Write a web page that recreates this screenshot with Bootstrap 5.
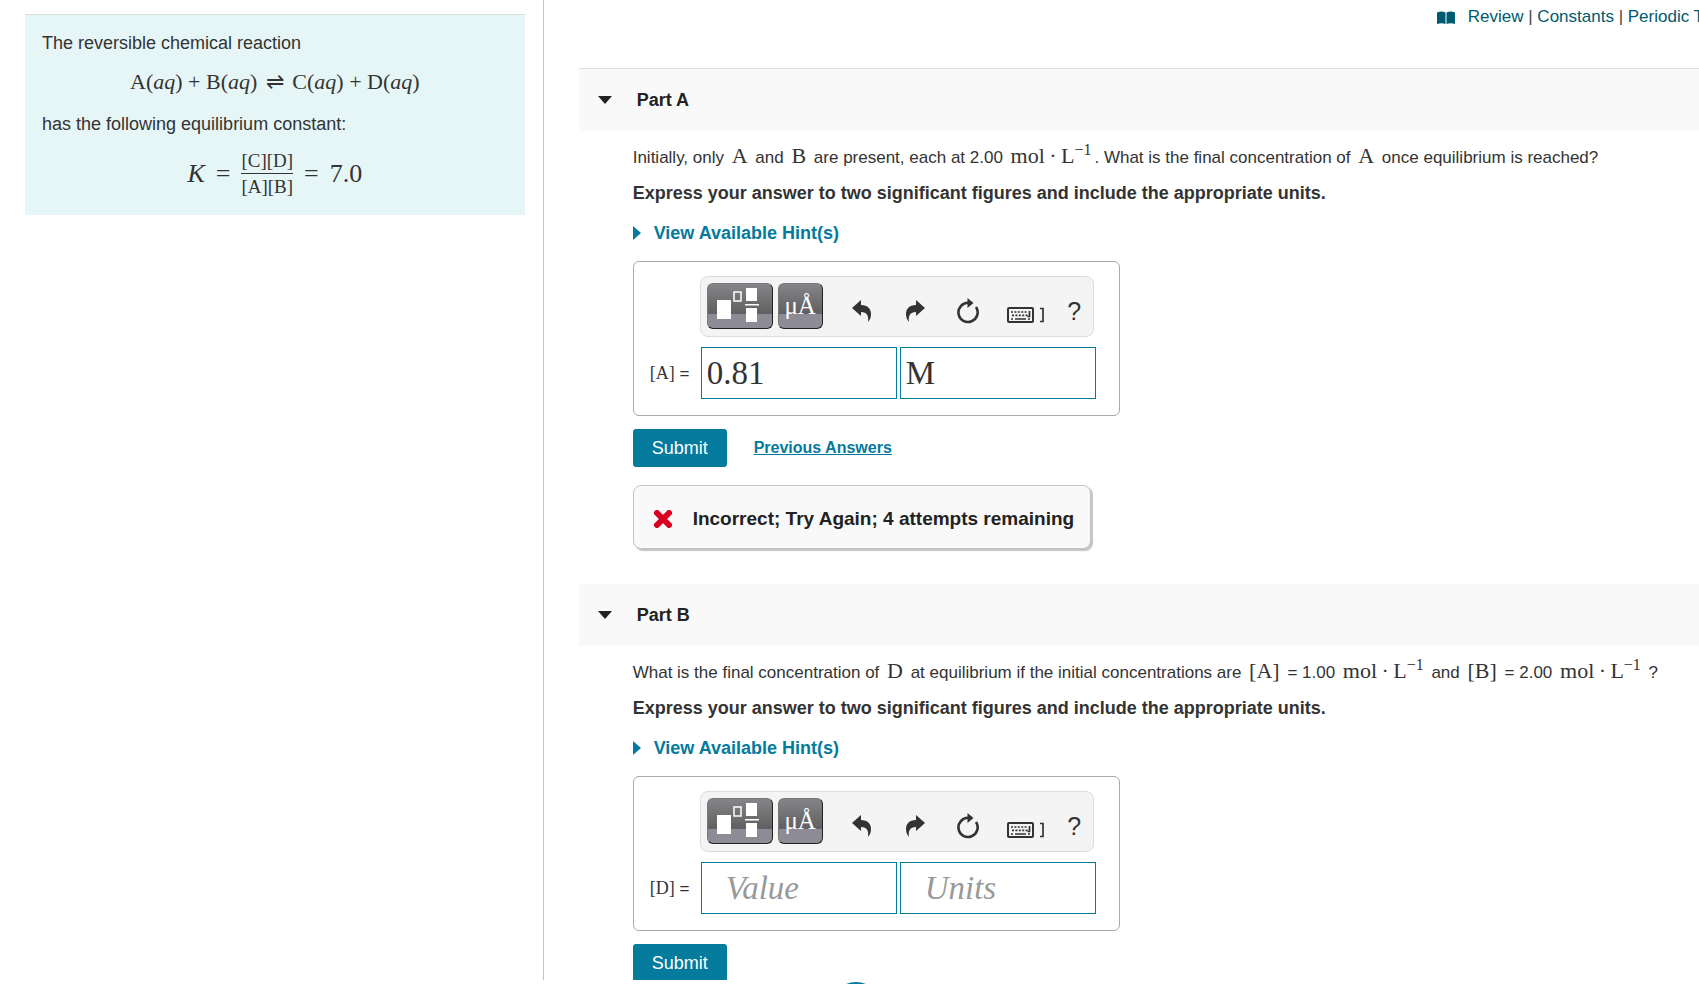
<!DOCTYPE html>
<html lang="en">
<head>
<meta charset="utf-8">
<meta name="viewport" content="width=device-width, initial-scale=1">
<title>Equilibrium constants</title>
<link href="https://cdn.jsdelivr.net/npm/bootstrap@5.3.0/dist/css/bootstrap.min.css" rel="stylesheet">
<style>
  :root { --teal: #047a9c; --deep: #005a70; }
  body { font: 18px/24px "Liberation Sans", Arial, sans-serif; color: #333; background: #fff; }
  p { margin: 0; }
  .side { flex: 0 0 32%; border-right: 1px solid #b4c8d6; padding: 14px 18px 0 25px; }
  .intro { background: #e6f6f7; border-top: 1px solid #ddd; padding: 16px 17px; }
  .work { min-width: 0; padding-left: 35px; }
  .refs { width: 262px; height: 68px; padding-top: 5px; color: #444; font-size: 17px; overflow: hidden; }
  .refs a { color: var(--deep); text-decoration: none; }
  .math { font-family: "Liberation Serif", "Times New Roman", serif; font-size: 22px; line-height: 24px; }
  .math sup { font-size: 16px; line-height: 1; top: -8px; vertical-align: baseline; }
  .reaction { padding-top: 15px; padding-bottom: 18px; }
  .arrows { margin: 0 3px; }
  .constant { font-size: 26px; padding-top: 12px; gap: 11px; }
  .fraction { font-size: 19px; line-height: 25px; }
  .fraction span:first-child { border-bottom: 1px solid #333; }
  .rule-top { border-top: 1px solid #ddd; }
  .part-head { background: #f9f9f9; height: 62px; padding-left: 19px; gap: 25px; color: #222; }
  .part-head h2 { font-size: 18px; line-height: 24px; font-weight: 700; margin: 0; }
  .part-body { padding: 15px 0 0 54px; }
  .ask { font-size: 17px; white-space: nowrap; }
  .ask .math { line-height: 18px; margin: 0 3px; }
  .order { font-weight: 700; padding-top: 11px; }
  .hint { color: var(--teal); font-weight: 700; text-decoration: none; gap: 13px; padding-top: 16px; }
  .answer { width: 487px; border: 1px solid #a9a9a9; border-radius: 6px; margin-top: 16px; padding: 14px 23px 16px 16px; }
  .tools { width: 394px; height: 61px; margin-right: 2px; border: 1px solid #ddd; border-radius: 8px; background: #f4f4f4; padding: 6px; color: #333; }
  .tools button { flex-shrink: 0; border: 0; background: none; padding: 0; color: inherit; }
  .tools .pad { height: 46px; border: 1px solid #222; border-top-color: #777; border-left-color: #777; border-radius: 6px; color: #fff;
    background: linear-gradient(#858589, #606062 67%, #8d8b96 68%, #8d8b96); }
  .pad-a { width: 66px; }
  .pad-b { width: 45px; margin-left: 5px; }
  .tools .pad-b { font-size: 25px; }
  .tools .ico { height: 46px; display: flex; align-items: center; justify-content: center; width: 53px; padding-top: 10px; }
  .ico-first { margin-left: 13px; }
  .tools .ico-keys { padding-top: 18px; padding-left: 9px; }
  .tools .ico-help { width: 44px; padding-left: 9px; font-size: 25px; }
  .entry { padding-top: 10px; }
  .entry label { width: 51px; font-size: 17px; white-space: nowrap; }
  .entry label span { font-size: 18px; }
  .entry .form-control { width: 196px; height: 52px; border: 1px solid var(--teal); border-radius: 0; padding: 0 5px; font: 33px/50px "Liberation Serif", "Times New Roman", serif; color: #333; }
  .entry .form-control + .form-control { margin-left: 3px; }
  .entry .form-control::placeholder { color: #999; font-style: italic; opacity: 1; }
  .entry .form-control:placeholder-shown { padding-left: 24px; }
  .send { width: 94px; height: 38px; background: var(--teal); color: #fff; border: 0; border-radius: 3px; font-size: 18px; padding: 0; }
  .send-row { padding-top: 13px; gap: 27px; }
  .previous { color: var(--teal); font-size: 16px; font-weight: 700; }
  .result { width: 458px; height: 64px; margin-top: 18px; margin-bottom: 35px; padding: 4px 0 0 20px; gap: 21px; background: #f9f9f9; border: 1px solid #c4c4c4; border-radius: 8px; box-shadow: 2px 2px 1px #c4c4c4; color: #222; font-size: 19px; font-weight: 700; white-space: nowrap; }
  .foot { flex: 0 0 4px; overflow: hidden; padding: 2px 0 0 12px; }
  .bubble { width: 52px; height: 52px; border-radius: 50%; background: var(--teal); }
</style>
</head>
<body>
<svg class="d-none" xmlns="http://www.w3.org/2000/svg">
  <symbol id="i-template" viewBox="0 0 64 44">
    <path fill="#fff" d="M9 16h14v19H9zM38 4h11v13H38zM38 24h11v14H38zM37 20h14v1.600H37z"/>
    <path fill="none" stroke="#fff" stroke-width="1.5" d="M26 8h7v9h-7z"/>
  </symbol>
  <symbol id="i-undo" viewBox="0 0 20 22">
    <path fill="currentColor" d="M0 8 9 0v5c7 0 10 4 10 9 0 3-1 6-3 8 1-6-1-10-7-10v4z"/>
  </symbol>
  <symbol id="i-reset" viewBox="0 0 24 26">
    <path fill="none" stroke="currentColor" stroke-width="2.6" d="M12.500 4.800A9.600 9.600 0 1 0 20 9"/>
    <path fill="currentColor" d="M11.500 0 17.500 5l-6 5z"/>
  </symbol>
  <symbol id="i-keys" viewBox="0 0 38 17">
    <rect x="1" y="1" width="25" height="14" rx="1" fill="none" stroke="currentColor" stroke-width="2"/>
    <path fill="none" stroke="currentColor" stroke-width="1.7" stroke-dasharray="2 1.4" d="M4 5h17M5 8.300h16"/>
    <path fill="none" stroke="currentColor" stroke-width="1.7" d="M4 12h2M8 12h11M21 12h2M22.500 4v5.500h-2M33 1.500h3v13h-3"/>
  </symbol>
</svg>

<div class="vh-100 d-flex flex-column overflow-hidden">
  <main class="d-flex flex-fill overflow-hidden">
    <aside class="side">
      <section class="intro">
        <p>The reversible chemical reaction</p>
        <p class="math reaction text-center">A(<i>aq</i>) + B(<i>aq</i>)<span class="arrows"> ⇌ </span>C(<i>aq</i>) + D(<i>aq</i>)</p>
        <p>has the following equilibrium constant:</p>
        <div class="math constant d-flex justify-content-center align-items-center">
          <i>K</i><span>=</span>
          <span class="fraction d-flex flex-column text-center"><span>[C][D]</span><span>[A][B]</span></span>
          <span>=</span><span>7.0</span>
        </div>
      </section>
    </aside>

    <div class="work flex-fill">
      <nav class="refs ms-auto text-nowrap" aria-label="References">
        <svg class="me-2" width="18" height="14" viewBox="0 0 18 14" aria-hidden="true"><path fill="#005a70" d="M0 1.500C3 .2 6 .2 8.500 1.500v11.500C6 12 3 12 0 13zM9.500 1.500C12 .2 15 .2 18 1.500V13c-3-1-6-1-8.500 0z"/></svg>
        <a href="#">Review</a> | <a href="#">Constants</a> | <a href="#">Periodic Table</a>
      </nav>

      <section>
        <div class="rule-top"></div>
        <header class="part-head d-flex align-items-center">
          <svg width="14" height="8" aria-hidden="true"><path fill="#222" d="M0 0h14L7 8z"/></svg>
          <h2>Part A</h2>
        </header>
        <div class="part-body">
          <p class="ask">Initially, only <span class="math">A</span> and <span class="math">B</span> are present, each at 2.00 <span class="math">mol&thinsp;·&thinsp;L<sup>−1</sup></span>. What is the final concentration of <span class="math">A</span> once equilibrium is reached?</p>
          <p class="order">Express your answer to two significant figures and include the appropriate units.</p>
          <a class="hint d-flex align-items-center" href="#"><svg width="8" height="14" aria-hidden="true"><path fill="currentColor" d="M0 0 8 7 0 14z"/></svg>View Available Hint(s)</a>
          <div class="answer">
            <div class="tools ms-auto d-flex">
              <button class="pad pad-a" type="button" aria-label="Templates"><svg class="d-block" width="64" height="44"><use href="#i-template"/></svg></button>
              <button class="pad pad-b math" type="button">μÅ</button>
              <button class="ico ico-first" type="button" aria-label="Undo"><svg width="20" height="22"><use href="#i-undo"/></svg></button>
              <button class="ico" type="button" aria-label="Redo"><svg width="20" height="22" viewBox="0 0 20 22"><g transform="matrix(-1 0 0 1 20 0)"><use href="#i-undo" width="20" height="22"/></g></svg></button>
              <button class="ico" type="button" aria-label="Reset"><svg width="24" height="26"><use href="#i-reset"/></svg></button>
              <button class="ico ico-keys" type="button" aria-label="Keyboard shortcuts"><svg width="38" height="17"><use href="#i-keys"/></svg></button>
              <button class="ico ico-help" type="button" aria-label="Help">?</button>
            </div>
            <div class="entry d-flex align-items-center">
              <label for="a-value"><span class="math">[A]</span> =</label>
              <input class="form-control" id="a-value" type="text" value="0.81">
              <input class="form-control" id="a-units" type="text" value="M" aria-label="Units of [A]">
            </div>
          </div>
          <div class="send-row d-flex align-items-center">
            <button class="btn send" type="submit">Submit</button>
            <a class="previous" href="#">Previous Answers</a>
          </div>
          <div class="result d-flex align-items-center" role="status">
            <svg width="18" height="18" viewBox="0 0 18 18" aria-hidden="true"><path stroke="#db0020" stroke-width="6" stroke-linecap="round" d="M3 3 15 15M15 3 3 15"/></svg>
            Incorrect; Try Again; 4 attempts remaining
          </div>
        </div>
      </section>

      <section>
        <header class="part-head d-flex align-items-center">
          <svg width="14" height="8" aria-hidden="true"><path fill="#222" d="M0 0h14L7 8z"/></svg>
          <h2>Part B</h2>
        </header>
        <div class="part-body">
          <p class="ask">What is the final concentration of <span class="math">D</span> at equilibrium if the initial concentrations are <span class="math">[A]</span> = 1.00 <span class="math">mol&thinsp;·&thinsp;L<sup>−1</sup></span> and <span class="math">[B]</span> = 2.00 <span class="math">mol&thinsp;·&thinsp;L<sup>−1</sup></span> ?</p>
          <p class="order">Express your answer to two significant figures and include the appropriate units.</p>
          <a class="hint d-flex align-items-center" href="#"><svg width="8" height="14" aria-hidden="true"><path fill="currentColor" d="M0 0 8 7 0 14z"/></svg>View Available Hint(s)</a>
          <div class="answer">
            <div class="tools ms-auto d-flex">
              <button class="pad pad-a" type="button" aria-label="Templates"><svg class="d-block" width="64" height="44"><use href="#i-template"/></svg></button>
              <button class="pad pad-b math" type="button">μÅ</button>
              <button class="ico ico-first" type="button" aria-label="Undo"><svg width="20" height="22"><use href="#i-undo"/></svg></button>
              <button class="ico" type="button" aria-label="Redo"><svg width="20" height="22" viewBox="0 0 20 22"><g transform="matrix(-1 0 0 1 20 0)"><use href="#i-undo" width="20" height="22"/></g></svg></button>
              <button class="ico" type="button" aria-label="Reset"><svg width="24" height="26"><use href="#i-reset"/></svg></button>
              <button class="ico ico-keys" type="button" aria-label="Keyboard shortcuts"><svg width="38" height="17"><use href="#i-keys"/></svg></button>
              <button class="ico ico-help" type="button" aria-label="Help">?</button>
            </div>
            <div class="entry d-flex align-items-center">
              <label for="d-value"><span class="math">[D]</span> =</label>
              <input class="form-control" id="d-value" type="text" placeholder="Value">
              <input class="form-control" id="d-units" type="text" placeholder="Units" aria-label="Units of [D]">
            </div>
          </div>
          <div class="send-row d-flex align-items-center">
            <button class="btn send" type="submit">Submit</button>
          </div>
        </div>
      </section>
    </div>
  </main>
  <footer class="foot"><div class="bubble mx-auto"></div></footer>
</div>
<script src="https://cdn.jsdelivr.net/npm/bootstrap@5.3.0/dist/js/bootstrap.bundle.min.js"></script>
</body>
</html>
